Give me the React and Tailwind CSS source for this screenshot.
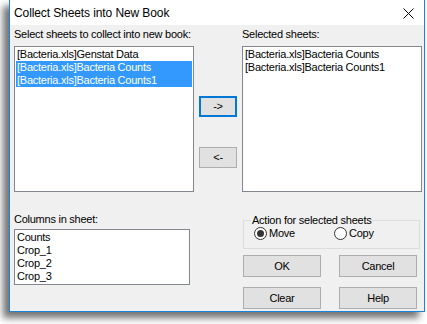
import React from "react";

const font = { fontFamily: '"Liberation Sans", Arial, sans-serif' };

const ListBox = ({ items, selected = [], className }) => (
  <div className={`bg-white border border-[#828790] px-[1px] py-[1px] ${className}`}>
    {items.map((item, i) => (
      <div
        key={item}
        className={`h-[13px] leading-[13px] pl-[1px] whitespace-nowrap ${
          selected.includes(i) ? "bg-[#3399ff] text-white" : "text-black"
        }`}
      >
        {item}
      </div>
    ))}
  </div>
);

const Button = ({ children, active, className }) => (
  <div
    className={`flex items-center justify-center bg-[#e1e1e1] ${
      active ? "border-2 border-[#0078d7]" : "border border-[#adadad]"
    } ${className}`}
  >
    {children}
  </div>
);

const Radio = ({ checked, label }) => (
  <div className="flex items-center gap-[2px]">
    <div className="w-[13px] h-[13px] rounded-full border border-[#333] bg-white flex items-center justify-center">
      {checked && <div className="w-[7px] h-[7px] rounded-full bg-[#333]" />}
    </div>
    <span>{label}</span>
  </div>
);

export default function App() {
  return (
    <div className="w-[427px] h-[324px] bg-white overflow-hidden">
      <div
        className="ml-[9px] w-[416px] h-[312px] border-l border-r border-b border-[#1883d7] bg-[#f0f0f0] flex flex-col shadow-[-6px_6px_7px_rgba(0,0,0,0.55)] text-[11px] tracking-[-0.25px] text-black"
        style={font}
      >
        {/* Title bar */}
        <div className="h-[25px] bg-white flex items-center justify-between pl-[4px] pr-[10px]">
          <span className="text-[12px] tracking-[-0.1px]">Collect Sheets into New Book</span>
          <svg width="11" height="11" viewBox="0 0 11 11" className="mt-[1px]">
            <path d="M0.5 0.5 L10.5 10.5 M10.5 0.5 L0.5 10.5" stroke="#000" strokeWidth="1" />
          </svg>
        </div>

        {/* Sheet lists */}
        <div className="flex pl-[4px] pr-[2px] pt-[2px]">
          <div className="w-[180px] flex flex-col">
            <div className="h-[13px] leading-[13px] mt-[1px] whitespace-nowrap">Select sheets to collect into new book:</div>
            <ListBox
              className="mt-[5px] h-[146px]"
              items={["[Bacteria.xls]Genstat Data", "[Bacteria.xls]Bacteria Counts", "[Bacteria.xls]Bacteria Counts1"]}
              selected={[1, 2]}
            />
          </div>
          <div className="w-[48px] flex flex-col items-center pt-[69px]">
            <Button active className="w-[38px] h-[21px]">-&gt;</Button>
            <Button className="w-[38px] h-[21px] mt-[30px]">&lt;-</Button>
          </div>
          <div className="w-[180px] flex flex-col">
            <div className="h-[13px] leading-[13px] mt-[1px]">Selected sheets:</div>
            <ListBox
              className="mt-[5px] h-[146px]"
              items={["[Bacteria.xls]Bacteria Counts", "[Bacteria.xls]Bacteria Counts1"]}
            />
          </div>
        </div>

        {/* Bottom area */}
        <div className="flex pl-[4px] pr-[2px] mt-[20px]">
          <div className="w-[180px] flex flex-col">
            <div className="h-[13px] leading-[13px] mt-[1px]">Columns in sheet:</div>
            <ListBox className="mt-[3px] h-[56px] w-[176px]" items={["Counts", "Crop_1", "Crop_2", "Crop_3"]} />
          </div>
          <div className="w-[48px]" />
          <div className="flex flex-col w-[180px] pl-[1px]">
            <div className="relative mt-[8px] h-[29px] w-[177px] border border-[#dcdcdc]">
              <span className="absolute -top-[7px] left-[7px] bg-[#f0f0f0] px-[1px] leading-[13px]">
                Action for selected sheets
              </span>
              <div className="flex pl-[10px] pt-[6px] leading-[13px]">
                <div className="w-[80px]">
                  <Radio checked label="Move" />
                </div>
                <Radio label="Copy" />
              </div>
            </div>
            <div className="flex justify-between w-[174px] mt-[6px]">
              <Button className="w-[78px] h-[22px]">OK</Button>
              <Button className="w-[78px] h-[22px]">Cancel</Button>
            </div>
            <div className="flex justify-between w-[174px] mt-[10px]">
              <Button className="w-[78px] h-[22px]">Clear</Button>
              <Button className="w-[78px] h-[22px]">Help</Button>
            </div>
          </div>
        </div>
      </div>
    </div>
  );
}
